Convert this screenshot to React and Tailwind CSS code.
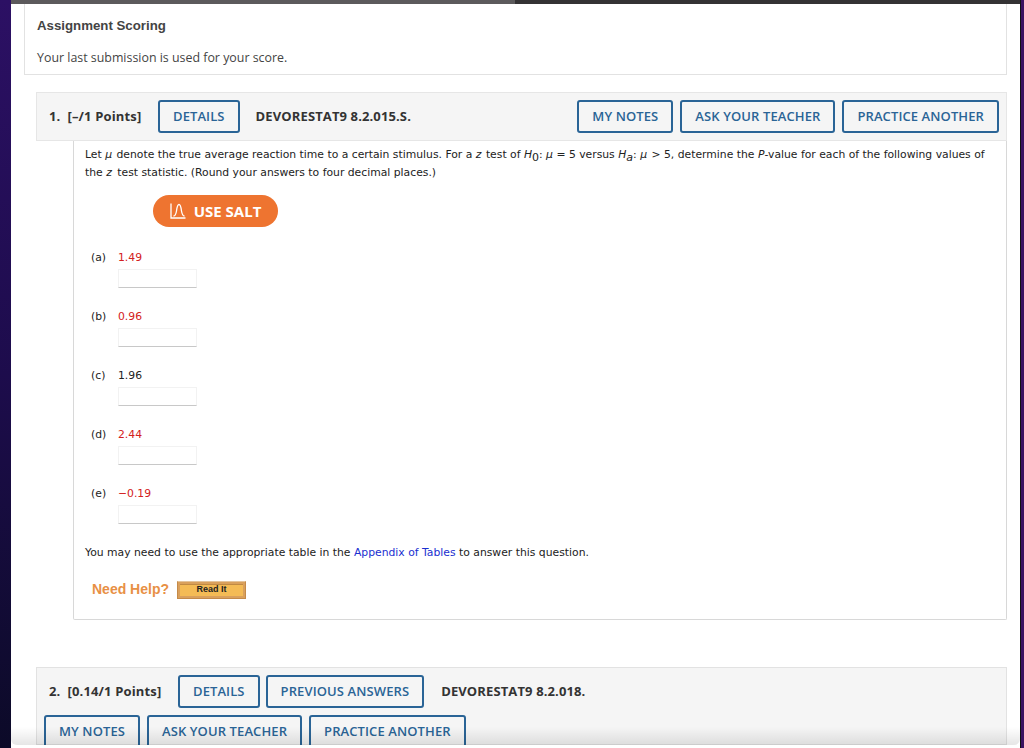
const sans = "font-['Open_Sans',sans-serif]";
const verdana = "font-['DejaVu_Sans',sans-serif]";

function Btn({ children }) {
    return (
        <button className={`h-[33px] px-[13px] shrink-0 border-2 border-[#2a6496] rounded-[3px] text-[#2a6496] text-[13px] font-semibold tracking-[0.1px] ${sans}`}>
            {children}
        </button>
    );
}

function Part({ label, value, red }) {
    return (
        <div className="h-[59px]">
            <div className={`flex text-[10.8px] leading-[16px] ${verdana}`}>
                <span className="w-[27px] text-[#222]">({label})</span>
                <span className={red ? 'text-[#d32020]' : 'text-[#222]'}>{value}</span>
            </div>
            <div className="ml-[27px] mt-[3px] w-[79px] h-[19px] border-x border-t border-b border-x-[#f2f2f2] border-t-[#f2f2f2] border-b-[#c8c8c8]"></div>
        </div>
    );
}

function SaltIcon() {
    return (
        <svg width="16" height="16" viewBox="0 0 16 16" fill="none" stroke="#fff" strokeWidth="1.3">
            <path d="M1 0.500v14.500H15.500" />
            <path d="M3.500 13c2 0 2.500-2 3-5 .5-4 1-6.500 2.500-6.500s2 2.500 2.500 6.500c.5 3 1 5 3 5" />
        </svg>
    );
}

export default function App() {
    return (
        <div className="h-[748px] overflow-hidden flex">
            <div className="w-[11px] shrink-0 bg-gradient-to-b from-[#2c1064] via-[#1d0c4c] to-[#0c0a28]"></div>
            <div className="relative w-[1009px] h-[745px] shrink-0 bg-white rounded-b-[6px] overflow-hidden flex flex-col">
                {/* top strip */}
                <div className="h-[4px] shrink-0 flex">
                    <div className="w-[504px] bg-[#5c5a5c]"></div>
                    <div className="flex-1 bg-[#343234]"></div>
                </div>

                <div className="pl-[13px] pr-[13px]">
                    <div className="h-[71px] border-x border-b border-[#e2e2e2] pl-[12px]">
                        <div className="pt-[13px] text-[13.25px] leading-[18px] font-bold text-[#444] font-['Liberation_Sans',sans-serif]">Assignment Scoring</div>
                        <div className={`mt-[14px] text-[12.4px] leading-[18px] text-[#444] ${sans}`}>Your last submission is used for your score.</div>
                    </div>

                    <div className="ml-[12px] mt-[17px]">
                        <div className="h-[49px] bg-[#f5f5f5] border border-[#e6e6e6] flex items-center pl-[12px] pr-[7px]">
                            <span className={`w-[109px] text-[13px] font-bold tracking-[0.15px] text-[#333] ${sans}`}>1.&nbsp; [–/1 Points]</span>
                            <Btn>DETAILS</Btn>
                            <span className={`ml-[16px] text-[13px] font-bold tracking-[0.12px] text-[#333] ${sans}`}>DEVORESTAT9 8.2.015.S.</span>
                            <div className="ml-auto flex gap-[7px]">
                                <Btn>MY NOTES</Btn>
                                <Btn>ASK YOUR TEACHER</Btn>
                                <Btn>PRACTICE ANOTHER</Btn>
                            </div>
                        </div>

                        <div className="ml-[37px] h-[479px] border-x border-b border-[#d8d8d8] rounded-b-[2px] pl-[11px] pr-[12px]">
                            <p className={`pt-[5px] text-[10.8px] leading-[18px] text-[#222] ${verdana}`}>
                                Let <i className="pr-[1px]">μ</i> denote the true average reaction time to a certain stimulus. For a <i className="pr-[1px]">z</i> test of <i>H</i><sub className="text-[11px] leading-none">0</sub>: <i>μ</i> = 5 versus <i>H</i><sub className="text-[11px] leading-none"><i>a</i></sub>: <i className="pr-[1px]">μ</i> &gt; 5, determine the <i>P</i>-value for each of the following values of the <i className="pr-[2px]">z</i> test statistic. (Round your answers to four decimal places.)
                            </p>
                            <div className="ml-[68px] mt-[13px] w-[125px] h-[32px] rounded-full bg-[#ee7430] flex items-center justify-center gap-[8px] text-white">
                                <SaltIcon />
                                <span className={`text-[15px] font-bold ${sans}`}>USE SALT</span>
                            </div>
                            <div className="mt-[23px] ml-[6px]">
                                <Part label="a" value="1.49" red />
                                <Part label="b" value="0.96" red />
                                <Part label="c" value="1.96" />
                                <Part label="d" value="2.44" red />
                                <Part label="e" value="−0.19" red />
                            </div>
                            <p className={`mt-[-1px] text-[10.8px] leading-[18px] text-[#222] ${verdana}`}>
                                You may need to use the appropriate table in the <span className="text-[#1a2fd0]">Appendix of Tables</span> to answer this question.
                            </p>
                            <div className="mt-[17px] ml-[7px] flex items-center gap-[8px]">
                                <span className="text-[14px] font-bold text-[#e89045] font-['Liberation_Sans',sans-serif]">Need Help?</span>
                                <div className="w-[69px] h-[18px] p-[2px] bg-[#d9a05c] border border-[#c58a48] border-t-[#e4c49c] flex">
                                    <div className="flex-1 bg-[#f4bb55] border-t border-[#c08a44] flex items-center justify-center text-[9px] font-bold text-[#222] font-['Liberation_Sans',sans-serif]">
                                        Read It
                                    </div>
                                </div>
                            </div>
                        </div>

                        <div className="mt-[47px] h-[78px] bg-[#f5f5f5] border border-[#e2e2e2] px-[7px]">
                            <div className="flex items-center mt-[7px]">
                                <span className={`ml-[5px] w-[129px] text-[13px] font-bold tracking-[0.15px] text-[#333] ${sans}`}>2.&nbsp; [0.14/1 Points]</span>
                                <Btn>DETAILS</Btn>
                                <span className="w-[6px]"></span>
                                <Btn>PREVIOUS ANSWERS</Btn>
                                <span className={`ml-[17px] text-[13px] font-bold tracking-[0.12px] text-[#333] ${sans}`}>DEVORESTAT9 8.2.018.</span>
                            </div>
                            <div className="flex gap-[7px] mt-[7px]">
                                <Btn>MY NOTES</Btn>
                                <Btn>ASK YOUR TEACHER</Btn>
                                <Btn>PRACTICE ANOTHER</Btn>
                            </div>
                        </div>
                    </div>
                </div>
                {/* window bottom shade */}
                <div className="absolute bottom-0 inset-x-0 h-[18px] bg-gradient-to-b from-transparent to-black/10 pointer-events-none"></div>
            </div>
            <div className="w-[1px] shrink-0 bg-[#111]"></div>
            <div className="flex-1 bg-[#3a1260]"></div>
        </div>
    );
}
